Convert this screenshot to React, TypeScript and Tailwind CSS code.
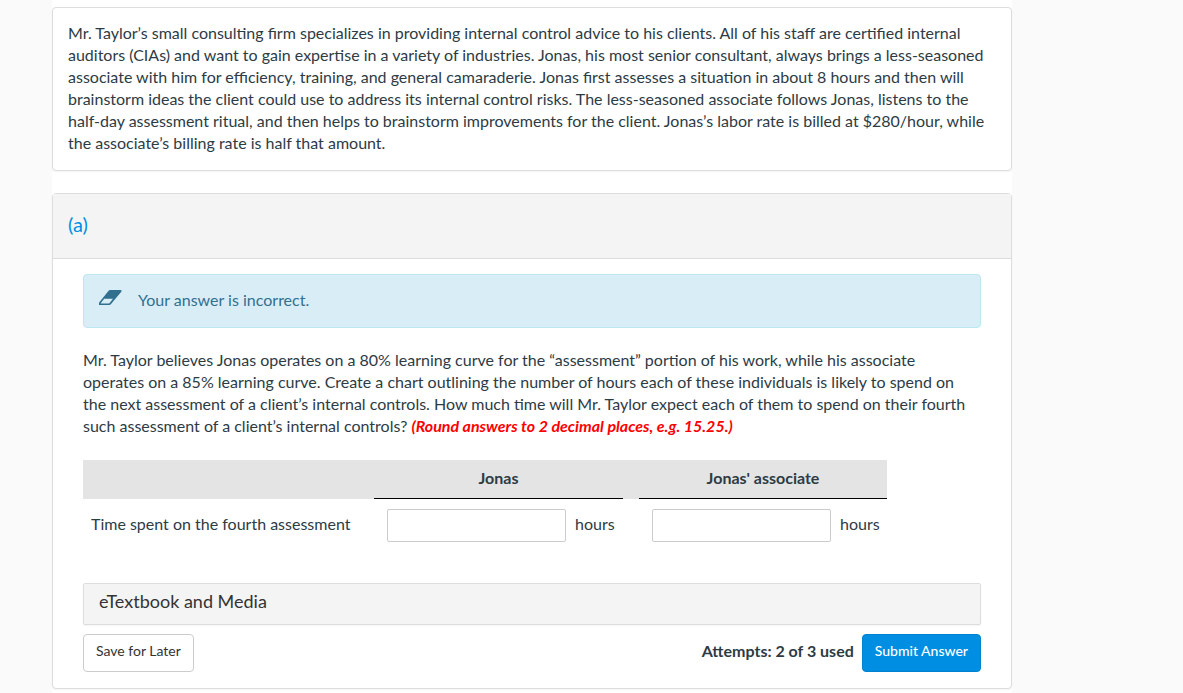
import React, { useState } from "react"

const HoursInput = ({ id, label }: { id: string; label: string }) => {
    const [value, setvalue] = useState("")

    return (
        <div className="flex items-center gap-[9px]">
            <input
                id={id}
                type="text"
                aria-label={label}
                value={value}
                onChange={(e) => setvalue(e.target.value)}
                className="h-[33px] w-[179px] rounded-xs border border-[#ccc] bg-white px-2 outline-none"
            />
            <label htmlFor={id} className="pb-1">hours</label>
        </div>
    )
}

const Scenario = () => (
    <section className="rounded-sm border border-[#ddd] bg-white px-[15px] pt-[14px] pb-4 shadow-xs">
        <p>
            Mr. Taylor’s small consulting firm specializes in providing internal control advice to his clients. All of his staff are certified internal
            auditors (CIAs) and want to gain expertise in a variety of industries. Jonas, his most senior consultant, always brings a less-seasoned
            associate with him for efficiency, training, and general camaraderie. Jonas first assesses a situation in about 8 hours and then will
            brainstorm ideas the client could use to address its internal control risks. The less-seasoned associate follows Jonas, listens to the
            half-day assessment ritual, and then helps to brainstorm improvements for the client. Jonas’s labor rate is billed at $280/hour, while
            the associate’s billing rate is half that amount.
        </p>
    </section>
)

const AnswerTable = () => (
    <table className="mt-[23px] w-[804px] table-fixed border-separate border-spacing-0">
        <thead>
            <tr className="h-[39px] bg-[#e4e4e4]">
                <td className="w-[291px]"></td>
                <th scope="col" className="w-[249px] border-b border-black pb-[2px] font-bold">Jonas</th>
                <td className="w-4"></td>
                <th scope="col" className="w-[248px] border-b border-black pb-[2px] font-bold">Jonas' associate</th>
            </tr>
        </thead>
        <tbody>
            <tr className="h-[53px]">
                <th scope="row" className="pb-1 pl-2 text-left font-normal">Time spent on the fourth assessment</th>
                <td className="pl-[13px]">
                    <HoursInput id="jonas" label="Hours for Jonas" />
                </td>
                <td></td>
                <td className="pl-[13px]">
                    <HoursInput id="associate" label="Hours for Jonas' associate" />
                </td>
            </tr>
        </tbody>
    </table>
)

export default function App() {
    return (
        <div className="min-h-screen bg-[#fafafa] pl-[52px] font-['Lato',sans-serif] text-[16px] leading-[22px] text-[#2d3b45]">
            <main className="mr-[171px] min-h-screen bg-white pt-[7px]">
                <Scenario />

                <section className="mt-[22px] rounded-sm border border-[#ddd] bg-white shadow-xs">
                    <h2 className="border-b border-[#ddd] bg-[#f4f4f4] px-[15px] pt-[19px] pb-[23px] text-[20px] text-[#008ee2]">(a)</h2>

                    <div className="px-[30px] pt-[15px] pb-4">
                        <div role="alert" className="flex h-[54px] items-center gap-[15px] rounded-sm border border-[#bce8f1] bg-[#d9edf7] px-[15px] pb-[2px] text-[#31708f]">
                            <svg viewBox="0 0 24 20" className="mb-1 h-5 w-6" fill="currentColor" aria-hidden="true">
                                <path fillRule="evenodd" d="M11.2 2h10.3q1.600.2.8 1.700L11.800 16.200q-.6.8-1.600.8H.4q-1.600-.2-.8-1.700L9.600 2.800Q10.200 2 11.200 2ZM5.200 10.800L1.500 15.500H10.200L14 10.800Z" />
                            </svg>
                            <span>Your answer is incorrect.</span>
                        </div>

                        <p className="mt-[21px] pr-2">
                            Mr. Taylor believes Jonas operates on a 80% learning curve for the “assessment” portion of his work, while his associate
                            operates on a 85% learning curve. Create a chart outlining the number of hours each of these individuals is likely to spend on
                            the next assessment of a client’s internal controls. How much time will Mr. Taylor expect each of them to spend on their fourth
                            such assessment of a client’s internal controls? <strong className="font-bold text-[#f00] italic">(Round answers to 2 decimal places, e.g. 15.25.)</strong>
                        </p>

                        <AnswerTable />

                        <button type="button" className="mt-[31px] block h-[42px] w-full rounded-xs border border-[#ddd] bg-[#f4f4f4] px-[15px] pb-[6px] text-left text-[18px] text-[#333] shadow-xs">
                            eTextbook and Media
                        </button>

                        <div className="mt-[9px] flex items-center justify-between">
                            <button type="button" className="h-[38px] rounded-sm border border-[#ccc] bg-white px-3 pb-1 text-[14px] text-[#333]">Save for Later</button>
                            <div className="flex items-center gap-2">
                                <span className="pb-1 font-bold">Attempts: 2 of 3 used</span>
                                <button type="button" className="h-[38px] rounded-sm border border-[#0081cd] bg-[#008ee2] px-3 pb-1 text-[14px] font-medium text-white">Submit Answer</button>
                            </div>
                        </div>
                    </div>
                </section>
            </main>
        </div>
    )
}
